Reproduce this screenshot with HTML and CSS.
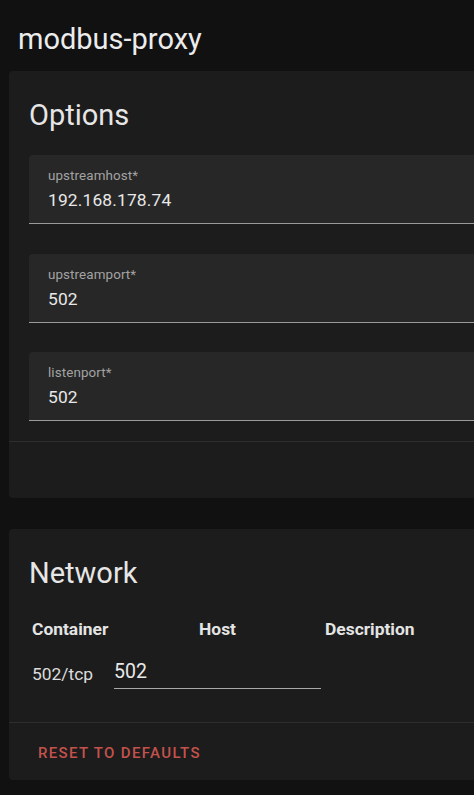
FILE: index.html
```html
<!DOCTYPE html>
<html lang="en">
<head>
<meta charset="utf-8">
<title>modbus-proxy</title>
<link rel="stylesheet" href="styles.css">
</head>
<body>
  <div class="page">
    <h1 class="title">modbus-proxy</h1>

    <section class="card card-options">
      <h2 class="card-header">Options</h2>
      <div class="fields">
        <div class="field">
          <div class="field-label">upstreamhost*</div>
          <div class="field-value">192.168.178.74</div>
        </div>
        <div class="field">
          <div class="field-label">upstreamport*</div>
          <div class="field-value">502</div>
        </div>
        <div class="field">
          <div class="field-label">listenport*</div>
          <div class="field-value">502</div>
        </div>
      </div>
      <div class="card-actions card-actions-empty"></div>
    </section>

    <section class="card card-network">
      <h2 class="card-header">Network</h2>
      <div class="net-table">
        <div class="th th-container">Container</div>
        <div class="th th-host">Host</div>
        <div class="th th-desc">Description</div>
        <div class="td td-container">502/tcp</div>
        <div class="td td-host"><div class="host-input">502</div></div>
        <div class="td td-desc"></div>
      </div>
      <div class="card-actions">
        <span class="reset-btn">Reset to defaults</span>
      </div>
    </section>
  </div>
</body>
</html>
```

FILE: styles.css
```css
html, body {
  margin: 0;
  padding: 0;
  background: #111111;
  overflow: hidden;
}

body {
  font-family: Roboto, "Noto Sans", "Liberation Sans", sans-serif;
  color: #e1e1e1;
  width: 474px;
  height: 795px;
}

.page {
  padding-top: 21px;
}

.title {
  margin: 0;
  padding-left: 18px;
  font-size: 29px;
  line-height: 36px;
  font-weight: 400;
  color: #ececec;
  white-space: nowrap;
}

.card {
  margin-left: 9px;
  background: #1c1c1c;
  border-radius: 4px 0 0 4px;
}

.card-options {
  margin-top: 14px;
}

.card-network {
  margin-top: 31px;
}

.card-header {
  margin: 0;
  padding: 26px 0 0 20px;
  font-size: 29px;
  line-height: 36px;
  font-weight: 400;
  color: #e6e6e6;
}

.fields {
  display: flex;
  flex-direction: column;
  gap: 29.5px;
  padding: 22px 0 20px 20px;
}

.field {
  box-sizing: border-box;
  height: 69px;
  padding: 13px 0 0 19px;
  background: #272727;
  border-radius: 4px 0 0 0;
  border-bottom: 1px solid #9a9a9a;
}

.field-label {
  font-size: 13.4px;
  line-height: 16px;
  color: #a3a3a3;
  letter-spacing: 0.1px;
}

.field-value {
  margin-top: 4px;
  font-size: 17.4px;
  line-height: 24px;
  color: #e8e8e8;
  letter-spacing: 0.15px;
}

.card-actions {
  border-top: 1px solid #2e2e2e;
}

.card-actions-empty {
  height: 56px;
}

.net-table {
  display: grid;
  grid-template-columns: 81px 211px auto;
  row-gap: 20px;
  padding: 27px 0 33px 22px;
  align-items: start;
}

.th {
  font-size: 17.4px;
  line-height: 22px;
  font-weight: 700;
  color: #e4e4e4;
}

.th-container {
  padding-left: 1px;
}

.th-host {
  text-align: center;
}

.th-desc {
  padding-left: 2px;
}

.td-container {
  padding-left: 1px;
  margin-top: 3px;
  font-size: 17.4px;
  line-height: 22px;
  color: #dcdcdc;
}

.td-host {
  padding: 0 2px;
}

.host-input {
  font-size: 19.5px;
  line-height: 24px;
  padding-bottom: 4px;
  border-bottom: 1px solid #a8a8a8;
  color: #e8e8e8;
}

.reset-btn {
  display: block;
  padding: 20px 0 17px 29px;
  font-size: 15px;
  line-height: 20px;
  font-weight: 500;
  letter-spacing: 1.34px;
  text-transform: uppercase;
  color: #c4524c;
}
```
